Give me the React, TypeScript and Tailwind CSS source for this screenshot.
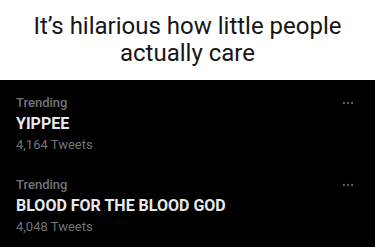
import { MoreHorizontal } from 'lucide-react';

const trends = [
  { name: 'YIPPEE', count: '4,164 Tweets' },
  { name: 'BLOOD FOR THE BLOOD GOD', count: '4,048 Tweets' },
];

export default function App() {
  return (
    <div className="w-[375px] h-[247px] overflow-hidden bg-white font-['Roboto',sans-serif]">
      <div className="h-[80px] flex items-center justify-center">
        <p className="text-[24px] leading-[27px] text-center text-[#161616]">
          It’s hilarious how little people
          <br />
          actually care
        </p>
      </div>
      <div className="bg-black h-[167px] pt-[13px]">
        {trends.map((t) => (
          <div key={t.name} className="flex justify-between px-[16px] h-[82px]">
            <div className="flex flex-col">
              <span className="text-[13px] leading-[20px] font-medium text-[#71767b]">Trending</span>
              <span className="text-[16px] leading-[22px] font-bold text-[#e7e9ea]">{t.name}</span>
              <span className="text-[13px] leading-[20px] text-[#71767b]">{t.count}</span>
            </div>
            <MoreHorizontal className="w-[14px] h-[14px] mt-[3px] mr-[4px] text-[#5b6066]" />
          </div>
        ))}
      </div>
    </div>
  );
}
